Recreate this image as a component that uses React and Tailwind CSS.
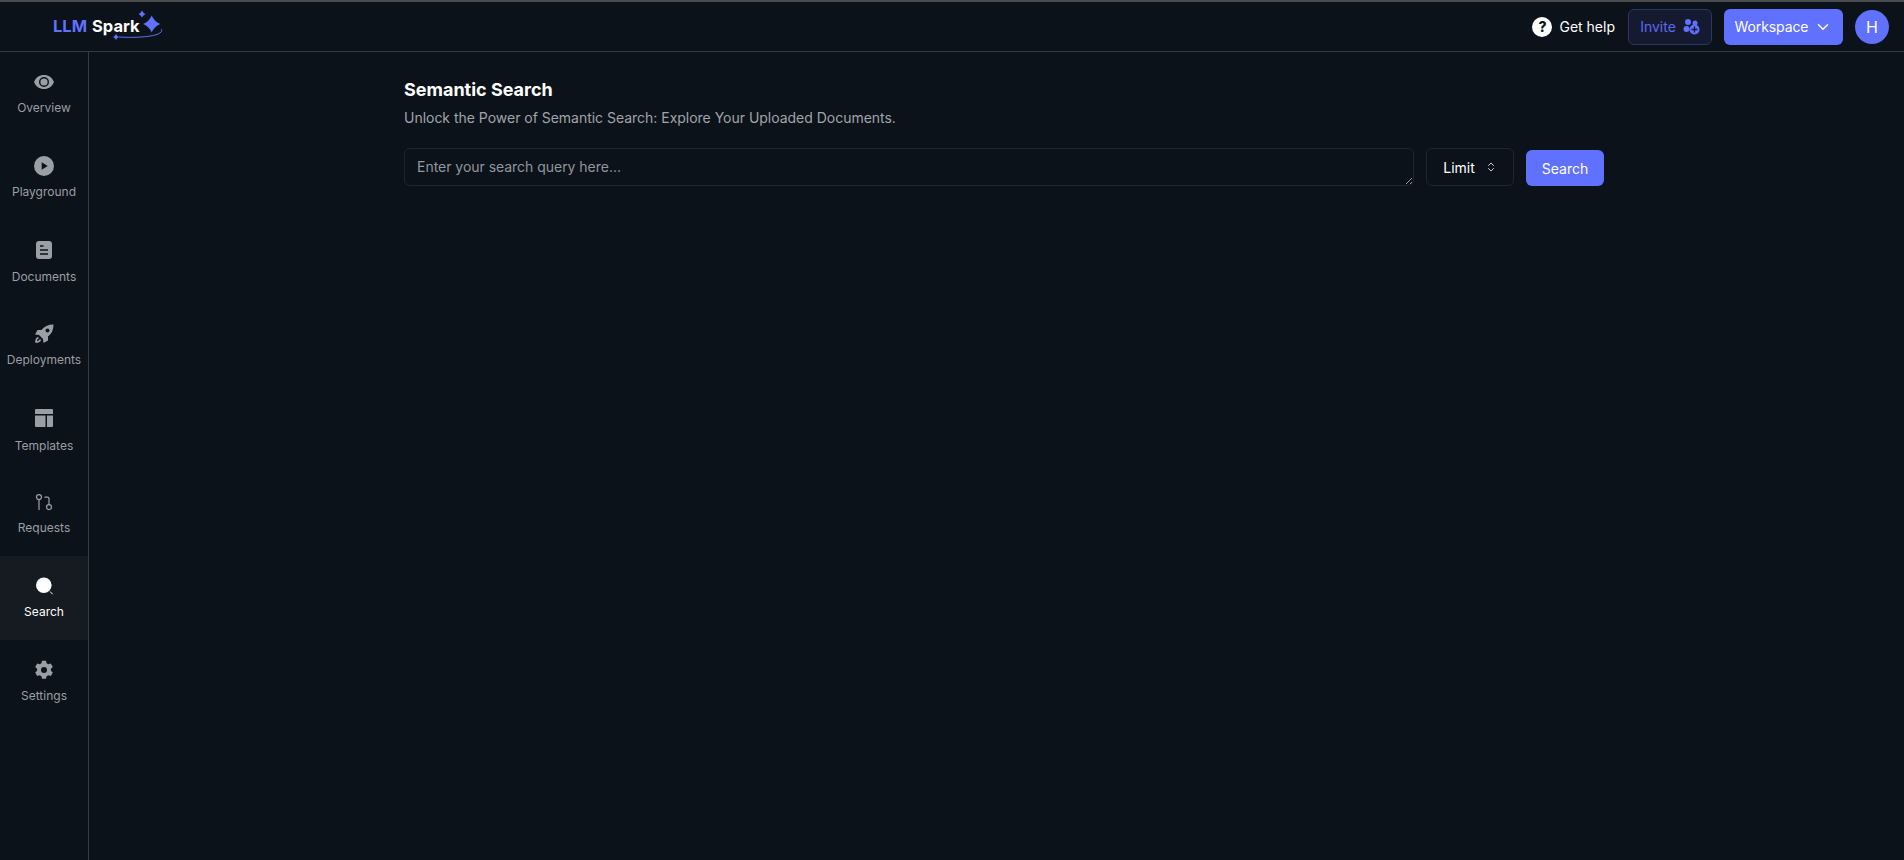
import React from "react";
import { ChevronDown, ChevronsUpDown, GitPullRequest } from "lucide-react";

const Star = ({ x, y, r, fill = "#6070ff" }) => (
  <path d={`M${x} ${y - r}Q${x + r * 0.3} ${y - r * 0.3} ${x + r} ${y}Q${x + r * 0.3} ${y + r * 0.3} ${x} ${y + r}Q${x - r * 0.3} ${y + r * 0.3} ${x - r} ${y}Q${x - r * 0.3} ${y - r * 0.3} ${x} ${y - r}Z`} fill={fill} />
);

const icons = {
  eye: (
    <svg width="20" height="20" viewBox="0 0 20 20"><path fillRule="evenodd" fill="currentColor" d="M0 10C1.700 5.600 5.500 3 10 3S18.300 5.600 20 10C18.300 14.400 14.500 17 10 17S1.700 14.400 0 10ZM10 5a5 5 0 1 0 0 10a5 5 0 0 0 0-10Z" /><circle cx="10" cy="10" r="3.600" fill="currentColor" /></svg>
  ),
  play: (
    <svg width="20" height="20" viewBox="0 0 20 20"><path fillRule="evenodd" fill="currentColor" d="M10 0a10 10 0 1 1 0 20a10 10 0 0 1 0-20ZM7.700 6.300v7.400l6-3.700Z" /></svg>
  ),
  doc: (
    <svg width="20" height="20" viewBox="0 0 20 20"><path fillRule="evenodd" fill="currentColor" d="M5 1h10a3 3 0 0 1 3 3v12a3 3 0 0 1-3 3H5a3 3 0 0 1-3-3V4a3 3 0 0 1 3-3ZM6 5.300v1.500h3.500V5.300ZM6 9.300v1.500h8V9.300ZM6 13.300v1.500h8v-1.500Z" /></svg>
  ),
  rocket: (
    <svg width="20" height="20" viewBox="0 0 20 20"><path fillRule="evenodd" fill="currentColor" d="M19.500 .500C14 .500 10 2.500 7.500 6H3.500L1 10.500l4 .500 4 4 .500 4 4.500-2.500v-4C17.500 10 19.500 6 19.500 .500ZM13.500 4.500a2 2 0 1 1 0 4a2 2 0 0 1 0-4Z" /><path fill="none" stroke="currentColor" strokeWidth="1.700" d="M4.500 13.500C3 14 2 15.500 2 18C4.500 18 6 17 6.500 15.500" /></svg>
  ),
  templates: (
    <svg width="20" height="20" viewBox="0 0 20 20"><path fill="currentColor" d="M2 1h16a1 1 0 0 1 1 1v4H1V2a1 1 0 0 1 1-1ZM1 7.500h10.500V19H2a1 1 0 0 1-1-1ZM13 7.500h6V18a1 1 0 0 1-1 1h-5Z" /></svg>
  ),
  gear: (
    <svg width="20" height="20" viewBox="0 0 20 20"><path fillRule="evenodd" fill="currentColor" d="M8 .800h4l.600 2.500 1.700 1 2.500-.700 2 3.400-1.900 1.800v2l1.900 1.800-2 3.400-2.500-.700-1.700 1-.600 2.500H8l-.600-2.500-1.700-1-2.500.700-2-3.400 1.900-1.800v-2L1.200 7l2-3.400 2.500.700 1.700-1ZM10 7a3 3 0 1 0 0 6a3 3 0 0 0 0-6Z" /></svg>
  ),
  search: (
    <svg width="20" height="20" viewBox="0 0 20 20"><circle cx="9.800" cy="9.300" r="7.800" fill="currentColor" /><path d="M16 15.500L18.700 18.200" stroke="currentColor" strokeWidth="1" /></svg>
  ),
};

const nav = [
  ["Overview", icons.eye, "gap-[8px]", false],
  ["Playground", icons.play, "gap-[8px]", false],
  ["Documents", icons.doc, "gap-[9px] pt-[1px]", false],
  ["Deployments", icons.rocket, "gap-[8px]", false],
  ["Templates", icons.templates, "gap-[10px] pt-[2px]", false],
  ["Requests", <GitPullRequest size={22} strokeWidth={1.5} />, "gap-[8px]", false],
  ["Search", icons.search, "gap-[8px]", true],
  ["Settings", icons.gear, "gap-[8px]", false],
];

export default function App() {
  return (
    <div className="h-[860px] overflow-hidden bg-[#0c1219] flex flex-col font-['Inter',sans-serif] border-t-2 border-[#4a4c50]">
      <header className="h-[50px] shrink-0 flex items-center border-b border-[#363b3f]">
        <div className="relative ml-[53px] w-[112px] h-[49px] flex items-center">
          <span className="text-[16.500px] font-bold leading-none text-[#6070ff]">LLM</span>
          <span className="ml-[5px] text-[16.500px] font-bold leading-none text-white">Spark</span>
          <svg className="absolute left-[58px] top-0" width="56" height="49" viewBox="0 0 56 49" fill="none">
            <Star x={31} y={12} r={3.5} />
            <Star x={40.700} y={22} r={8.5} />
            <Star x={5} y={35} r={3} />
            <path d="M8 35C24 36 46 35 50 30C51 29 51 28 50 27" stroke="#6070ff" strokeWidth="1" />
          </svg>
        </div>
        <div className="ml-auto flex items-center">
          <span className="w-[20px] h-[20px] rounded-full bg-white text-[#0c1219] text-[14px] font-extrabold flex items-center justify-center">?</span>
          <span className="ml-[7px] text-[14px] text-white">Get help</span>
          <button className="ml-[13px] h-[36px] w-[84px] rounded-md border border-[#2c3566] bg-[#151a30] text-[#5a69f0] text-[14px] flex items-center justify-center gap-[7px]">
            Invite
            <svg width="17" height="16" viewBox="0 0 17 16" fill="#6070ff"><circle cx="5" cy="3" r="3" /><circle cx="3.500" cy="10" r="3" /><circle cx="12" cy="4" r="2.500" /><circle cx="11.500" cy="10.500" r="5" /><path d="M11.500 7.500v6M8.500 10.500h6" stroke="#151a30" strokeWidth="1.300" /></svg>
          </button>
          <button className="ml-[12px] h-[36px] w-[119px] rounded-md bg-[#6070ff] text-white text-[14px] tracking-[-0.1px] flex items-center justify-center gap-[6px]">
            Workspace <ChevronDown size={18} strokeWidth={2} />
          </button>
          <div className="ml-[12px] mr-[15px] w-[34px] h-[34px] rounded-full bg-[#6070ff] text-white text-[16px] flex items-center justify-center">H</div>
        </div>
      </header>
      <div className="flex flex-1 min-h-0">
        <aside className="w-[89px] shrink-0 border-r border-[#363b3f]">
          {nav.map(([label, icon, spacing, active]) => (
            <div key={label} className={`h-[84px] flex flex-col items-center justify-center ${spacing} ${active ? "bg-[#161b22] text-white" : "text-[#9a9ea5]"}`}>
              <span className="w-[20px] h-[20px] flex items-center justify-center">{icon}</span>
              <span className="text-[12px] leading-[16px]">{label}</span>
            </div>
          ))}
        </aside>
        <main className="flex-1 pl-[315px] pt-[24px]">
          <div className="w-[1200px]">
            <h1 className="text-[18px] leading-[28px] font-bold text-white">Semantic Search</h1>
            <p className="mt-[4px] text-[14px] leading-[20px] tracking-[-0.02px] text-[#a1a4aa]">Unlock the Power of Semantic Search: Explore Your Uploaded Documents.</p>
            <div className="mt-[20px] flex items-start">
              <textarea
                rows={1}
                placeholder="Enter your search query here..."
                className="w-[1010px] h-[38px] px-[12px] py-[8px] text-[14px] leading-[20px] tracking-[-0.03px] rounded-md border border-[#1e2631] bg-transparent text-white placeholder:text-[#92969d] outline-none"
              />
              <button className="ml-[12px] w-[88px] h-[38px] rounded-md border border-[#1e2631] text-white text-[14px] flex items-center justify-center gap-[10px]">
                Limit <ChevronsUpDown size={12} className="opacity-80" />
              </button>
              <button className="ml-[12px] mt-[2px] w-[78px] h-[36px] rounded-md bg-[#6070ff] text-white text-[14px] flex items-center justify-center">Search</button>
            </div>
          </div>
        </main>
      </div>
    </div>
  );
}
